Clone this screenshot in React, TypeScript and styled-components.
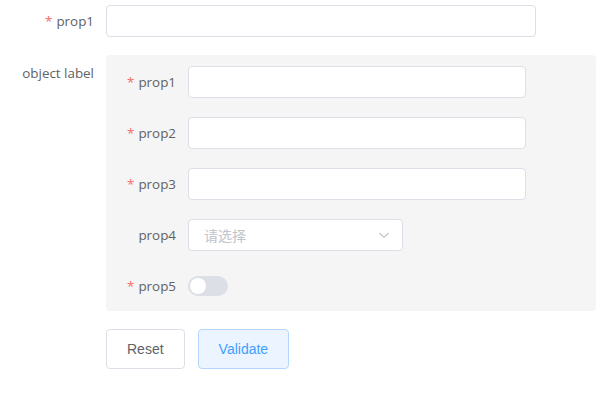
import React from "react";
import styled, { createGlobalStyle } from "styled-components";

const Global = createGlobalStyle`
  html, body { margin: 0; padding: 0; background: #fff; }
  body { font-family: "Open Sans", "Noto Sans CJK SC", sans-serif; font-size: 14px; color: #606266; }
  * { box-sizing: border-box; }
`;

const Page = styled.div`
  padding: 5px 0 0 0;
  width: 602px;
`;

const Row = styled.div<{ $labelWidth: number; $mb?: number; $h?: number }>`
  display: flex;
  align-items: flex-start;
  margin-bottom: ${(p) => (p.$mb ?? 19)}px;
  & > label {
    width: ${(p) => p.$labelWidth}px;
    flex: none;
    text-align: right;
    padding-right: 12px;
    height: ${(p) => p.$h ?? 32}px;
    line-height: ${(p) => p.$h ?? 32}px;
    font-size: 13.4px;
    color: #606266;
    white-space: nowrap;
  }
`;

const Star = styled.span`
  color: #f56c6c;
  margin-right: 4px;
`;

const Input = styled.div<{ $w: number }>`
  width: ${(p) => p.$w}px;
  height: 32px;
  border: 1px solid #dcdfe6;
  border-radius: 4px;
  background: #fff;
`;

const Select = styled.div`
  width: 215px;
  height: 32px;
  border: 1px solid #dcdfe6;
  border-radius: 4px;
  background: #fff;
  display: flex;
  align-items: center;
  justify-content: space-between;
  padding: 0 11px 0 15px;
  color: #c0c4cc;
  font-family: "Noto Sans CJK SC", sans-serif;
  font-size: 14px;
`;

const Group = styled.div`
  width: 490px;
  background: #f5f5f5;
  border-radius: 4px;
  padding: 11px 0 9px 0;
`;

const ObjLabel = styled.label`
  && { line-height: 36px; height: 36px; }
`;

const Switch = styled.div`
  margin-top: 6px;
  width: 40px;
  height: 20px;
  border-radius: 10px;
  background: #dcdfe6;
  position: relative;
  &::after {
    content: "";
    position: absolute;
    left: 2px;
    top: 2px;
    width: 16px;
    height: 16px;
    border-radius: 50%;
    background: #fff;
  }
`;

const Buttons = styled.div`
  display: flex;
  gap: 13px;
  padding-left: 106px;
`;

const Button = styled.button<{ $primary?: boolean }>`
  height: 40px;
  padding: 0 20px;
  border-radius: 4px;
  font-family: "Liberation Sans", Arial, sans-serif;
  font-size: 14px;
  border: 1px solid ${(p) => (p.$primary ? "#b3d8ff" : "#dcdfe6")};
  background: ${(p) => (p.$primary ? "#ecf5ff" : "#fff")};
  color: ${(p) => (p.$primary ? "#409eff" : "#606266")};
`;

export default function App() {
  return (
    <>
      <Global />
      <Page>
        <Row $labelWidth={106} $mb={18}>
          <label><Star>*</Star>prop1</label>
          <Input $w={430} />
        </Row>
        <Row $labelWidth={106} $mb={18}>
          <ObjLabel>object label</ObjLabel>
          <Group>
            {["prop1", "prop2", "prop3"].map((n) => (
              <Row key={n} $labelWidth={82}>
                <label><Star>*</Star>{n}</label>
                <Input $w={338} />
              </Row>
            ))}
            <Row $labelWidth={82}>
              <label>prop4</label>
              <Select>
                <span>请选择</span>
                <svg width="14" height="14" viewBox="0 0 14 14">
                  <path d="M2.5 5 L7 9.5 L11.5 5" fill="none" stroke="#c0c4cc" strokeWidth="1.1" />
                </svg>
              </Select>
            </Row>
            <Row $labelWidth={82} $mb={0}>
              <label><Star>*</Star>prop5</label>
              <Switch />
            </Row>
          </Group>
        </Row>
        <Buttons>
          <Button>Reset</Button>
          <Button $primary>Validate</Button>
        </Buttons>
      </Page>
    </>
  );
}
